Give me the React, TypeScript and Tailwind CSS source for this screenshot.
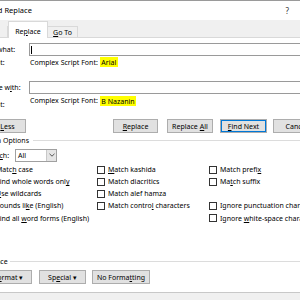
import React from 'react';

function Btn({ w, className = '', children }: { w: string; className?: string; children: React.ReactNode }) {
  return (
    <div
      className={`${w} h-[14px] shrink-0 flex items-center justify-center bg-[#e1e1e1] border border-[#adadad] whitespace-nowrap ${className}`}
    >
      {children}
    </div>
  );
}

function Check({ children }: { children: React.ReactNode }) {
  return (
    <div className="h-[12.1px] flex items-center whitespace-nowrap">
      <div className="w-[8px] h-[8px] shrink-0 border border-[#333333] bg-white" />
      <span className="ml-[3px]">{children}</span>
    </div>
  );
}

export default function App() {
  return (
    <div className="w-[300px] h-[300px] overflow-hidden bg-white text-black text-[7px] leading-none font-['Noto_Sans',sans-serif] flex flex-col">
      {/* Title bar */}
      <div className="h-[20px] shrink-0 border-t border-[#9a9a9a] flex items-center justify-between">
        <span className="ml-[-28px] text-[7.5px] whitespace-nowrap">Find and Replace</span>
        <span className="mr-[11px] text-[8px] text-[#333]">?</span>
      </div>

      {/* Tabs */}
      <div className="h-[18px] shrink-0 bg-[#f0f0f0] border-b border-[#d9d9d9] flex items-end">
        <div className="w-[8px] h-[11px] border-r border-[#d9d9d9]" />
        <div className="w-[40px] h-[17px] mb-[-1px] bg-white border border-b-0 border-[#d9d9d9] flex items-center justify-center pt-[2px]">
          Re<u>p</u>lace
        </div>
        <div className="w-[30px] h-[11px] border-t border-r border-[#d9d9d9] flex items-center justify-center">
          <u>G</u>o To
        </div>
      </div>

      {/* Find what */}
      <div className="mt-[5px] h-[13px] shrink-0 flex items-center">
        <span className="ml-[-19px] w-[48px] shrink-0 whitespace-nowrap">
          Fi<u>n</u>d what:
        </span>
        <div className="flex-1 h-[13px] mr-[-10px] border border-[#9a9a9a] flex items-center pl-[1px]">
          <div className="w-px h-[8px] bg-black" />
        </div>
      </div>
      <div className="h-[12px] shrink-0 flex items-center">
        <span className="ml-[-21px] w-[51px] shrink-0 whitespace-nowrap">Format:</span>
        <span className="whitespace-nowrap">Complex Script Font: </span>
        <span className="ml-[2px] bg-[#ffff00] px-[1.5px] h-[10px] flex items-center">Arial</span>
      </div>

      {/* Replace with */}
      <div className="mt-[13px] h-[13px] shrink-0 flex items-center">
        <span className="ml-[-23px] w-[52px] shrink-0 whitespace-nowrap">
          Replace w<u>i</u>th:
        </span>
        <div className="flex-1 h-[13px] mr-[-10px] border border-[#9a9a9a]" />
      </div>
      <div className="h-[12px] shrink-0 flex items-start">
        <span className="ml-[-21px] w-[51px] shrink-0 whitespace-nowrap mt-[7px]">Format:</span>
        <span className="whitespace-nowrap mt-[3px]">Complex Script Font: </span>
        <span className="ml-[2px] mt-[2px] bg-[#ffff00] px-[1.5px] h-[10px] flex items-center whitespace-nowrap">B Nazanin</span>
      </div>

      {/* Action buttons */}
      <div className="mt-[13px] h-[14px] shrink-0 flex">
        <Btn w="w-[47px]" className="ml-[-21px]">
          &lt;&lt; <u className="ml-[2px]">L</u>ess
        </Btn>
        <Btn w="w-[45px]" className="ml-[87px]">
          <u>R</u>eplace
        </Btn>
        <Btn w="w-[46px]" className="ml-[9px]">
          Replace <u className="ml-[2px]">A</u>ll
        </Btn>
        <Btn w="w-[47px]" className="ml-[7px] border-[#0078d7] shadow-[inset_0_0_0_1px_#0078d7]">
          <u>F</u>ind Next
        </Btn>
        <Btn w="w-[47px]" className="ml-[6px]">
          Cancel
        </Btn>
      </div>

      {/* Search Options */}
      <div className="mt-[2px] h-[10px] shrink-0 flex items-center">
        <span className="ml-[-21px] whitespace-nowrap">Search Options</span>
        <div className="flex-1 h-px bg-[#dcdcdc] ml-[4px]" />
      </div>

      <div className="mt-[3px] h-[14px] shrink-0 flex items-center">
        <span className="ml-[-15px] w-[30px] shrink-0 whitespace-nowrap">
          Sear<u>c</u>h:
        </span>
        <div className="w-[42px] h-[13px] border border-[#a0a0a0] flex items-stretch">
          <span className="flex-1 flex items-center pl-[2px]">All</span>
          <div className="w-[10px] bg-[#e5e5e5] border-l border-[#c8c8c8] flex items-center justify-center">
            <svg width="6" height="4" viewBox="0 0 6 4">
              <path d="M0.5 0.8 L3 3.2 L5.5 0.8" fill="none" stroke="#444" strokeWidth="0.9" />
            </svg>
          </div>
        </div>
      </div>

      {/* Checkbox grid */}
      <div className="mt-[1.6px] shrink-0 flex ml-[-15px]">
        <div className="w-[112px] shrink-0 flex flex-col">
          <Check>
            Matc<u>h</u> case
          </Check>
          <Check>
            Find whole words onl<u>y</u>
          </Check>
          <Check>
            <u>U</u>se wildcards
          </Check>
          <Check>
            Sounds li<u>k</u>e (English)
          </Check>
          <Check>
            Find all <u>w</u>ord forms (English)
          </Check>
        </div>
        <div className="w-[112px] shrink-0 flex flex-col">
          <Check>
            <u>M</u>atch kashida
          </Check>
          <Check>
            Match diacritics
          </Check>
          <Check>
            Match alef hamza
          </Check>
          <Check>
            Match contro<u>l</u> characters
          </Check>
        </div>
        <div className="flex-1 flex flex-col">
          <Check>
            Match prefi<u>x</u>
          </Check>
          <Check>
            Ma<u>t</u>ch suffix
          </Check>
          <div className="h-[12.1px]" />
          <Check>
            Ignore punctuation characters
          </Check>
          <Check>
            Ignore <u>w</u>hite-space characters
          </Check>
        </div>
      </div>

      {/* Replace group */}
      <div className="mt-[32px] h-[10px] shrink-0 flex items-center">
        <span className="ml-[-18px] whitespace-nowrap">Replace</span>
        <div className="flex-1 h-px bg-[#dcdcdc] ml-[2px]" />
      </div>
      <div className="mt-[4px] h-[14px] shrink-0 flex">
        <Btn w="w-[47px]" className="ml-[-15px]">
          F<u>o</u>rmat ▾
        </Btn>
        <Btn w="w-[47px]" className="ml-[7px]">
          Sp<u>e</u>cial ▾
        </Btn>
        <Btn w="w-[58px]" className="ml-[6px]">
          No Forma<u>t</u>ting
        </Btn>
      </div>

      <div className="mt-[8px] flex-1 border-t border-[#c8c8c8] bg-[#f0f0f0]" />
    </div>
  );
}
